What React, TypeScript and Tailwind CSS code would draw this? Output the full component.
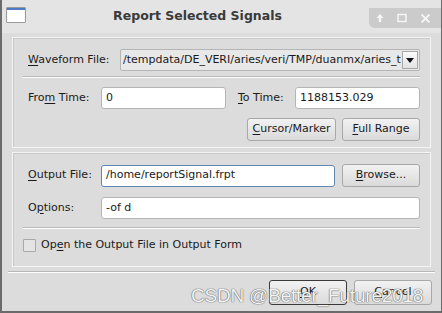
import React from 'react'

const font = { fontFamily: '"DejaVu Sans", Verdana, sans-serif' }

// underline one letter, like a Tk mnemonic
const Mn = ({ text, at }: { text: string; at: number }) => (
  <span>
    {text.slice(0, at)}
    <span className="underline underline-offset-2">{text[at]}</span>
    {text.slice(at + 1)}
  </span>
)

const Field = ({ value, className = '', focus = false }: { value: string; className?: string; focus?: boolean }) => (
  <div
    className={`h-[22px] bg-white rounded-[3px] flex items-center px-[4px] text-[11px] text-[#1a1a1a] whitespace-nowrap overflow-hidden border ${
      focus ? 'border-[#5f87b3]' : 'border-[#b5b5b5]'
    } ${className}`}
  >
    {value}
  </div>
)

const Btn = ({ children, className = '', primary = false }: { children: React.ReactNode; className?: string; primary?: boolean }) => (
  <div
    className={`h-[23px] rounded-[3px] flex items-center justify-center text-[11px] text-[#1a1a1a] bg-gradient-to-b from-[#f2f2f2] to-[#dadada] border ${
      primary ? 'border-[#3a3a3a]' : 'border-[#a8a8a8]'
    } ${className}`}
  >
    {children}
  </div>
)

const Sep = ({ className = '' }: { className?: string }) => (
  <div className={`h-[2px] border-t border-[#b8b8b8] border-b border-b-white ${className}`} />
)

export default function App() {
  return (
    <div style={font} className="relative w-[442px] h-[313px] bg-[#dcdcdc] border-l-2 border-b-2 border-r border-[#6b6b6b] flex flex-col overflow-hidden">
      {/* title bar */}
      <div className="h-[33px] flex items-start relative bg-[#e4e4e4]">
        <div className="ml-[4px] mt-[7px] w-[20px] h-[16px] bg-white border border-[#9a9a9a] rounded-[1px] overflow-hidden">
          <div className="h-[2px] bg-[#4a7bc4]" />
        </div>
        <div className="flex-1 text-center mt-[7px] text-[12.5px] font-bold text-[#3a3a3a]">Report Selected Signals</div>
        <div className="mt-[8px] w-[72px] h-[20px] bg-[#cbcbcb] rounded-bl-[6px] flex items-center justify-around pr-[4px]">
          <svg width="10" height="10" viewBox="0 0 10 10">
            <path d="M5 1 L1.5 5 H3.8 V9 H6.2 V5 H8.5 Z" fill="#f7f7f7" />
          </svg>
          <svg width="10" height="10" viewBox="0 0 10 10">
            <rect x="1" y="1.5" width="8" height="7" fill="none" stroke="#f7f7f7" strokeWidth="1.4" />
          </svg>
          <svg width="11" height="11" viewBox="0 0 10 10">
            <path d="M1.5 1.5 L8.5 8.5 M8.5 1.5 L1.5 8.5" stroke="#f7f7f7" strokeWidth="1.8" />
          </svg>
        </div>
      </div>

      <div className="px-[10px] pt-[4px] flex flex-col gap-[4px]">
        {/* panel 1 */}
        <div className="h-[111px] border border-[#f4f4f4] shadow-[inset_1px_1px_0_#c8c8c8] px-[10px] pt-[11px]">
          <div className="flex items-center h-[22px]">
            <div className="w-[97px] pl-[5px] text-[11px] text-[#1a1a1a]"><Mn text="Waveform File:" at={0} /></div>
            <div className="flex-1 h-[22px] bg-[#e8e8e8] border border-[#b5b5b5] rounded-[2px] flex items-center pl-[2px] text-[11px] text-[#1a1a1a] overflow-hidden whitespace-nowrap">
              <span className="flex-1 overflow-hidden">/tempdata/DE_VERI/aries/veri/TMP/duanmx/aries_t</span>
              <div className="w-[16px] h-[18px] mr-[1px] bg-gradient-to-b from-[#fafafa] to-[#e2e2e2] border border-[#a8a8a8] flex items-center justify-center">
                <svg width="8" height="5" viewBox="0 0 8 5"><path d="M0 0 H8 L4 5 Z" fill="#111" /></svg>
              </div>
            </div>
          </div>
          <Sep className="mt-[5px]" />
          <div className="flex items-center mt-[9px]">
            <div className="w-[78px] pl-[5px] text-[11px] text-[#1a1a1a]"><Mn text="From Time:" at={3} /></div>
            <Field value="0" className="w-[125px]" />
            <div className="w-[69px] pl-[12px] text-[11px] text-[#1a1a1a]"><Mn text="To Time:" at={0} /></div>
            <Field value="1188153.029" className="flex-1" />
          </div>
          <div className="flex justify-end gap-[6px] mt-[9px]">
            <Btn className="w-[89px]"><Mn text="Cursor/Marker" at={0} /></Btn>
            <Btn className="w-[78px]"><Mn text="Full Range" at={0} /></Btn>
          </div>
        </div>

        {/* panel 2 */}
        <div className="h-[115px] border border-[#f4f4f4] shadow-[inset_1px_1px_0_#c8c8c8] px-[10px] pt-[11px]">
          <div className="flex items-center">
            <div className="w-[78px] pl-[5px] text-[11px] text-[#1a1a1a]"><Mn text="Output File:" at={0} /></div>
            <Field value="/home/reportSignal.frpt" focus className="w-[234px]" />
            <Btn className="w-[78px] ml-[7px] h-[22px]"><Mn text="Browse..." at={0} /></Btn>
          </div>
          <div className="flex items-center mt-[10px]">
            <div className="w-[78px] pl-[5px] text-[11px] text-[#1a1a1a]"><Mn text="Options:" at={1} /></div>
            <Field value="-of d" className="flex-1" />
          </div>
          <Sep className="mt-[8px]" />
          <div className="flex items-center mt-[8px] gap-[5px]">
            <div className="w-[13px] h-[13px] bg-[#e4e4e4] border border-[#a8a8a8] rounded-[1px]" />
            <div className="text-[11px] text-[#1a1a1a]"><Mn text="Open the Output File in Output Form" at={2} /></div>
          </div>
        </div>
      </div>

      <Sep className="mx-[6px] mt-[4px]" />
      <div className="flex justify-end gap-[7px] pr-[9px] mt-[7px]">
        <Btn primary className="w-[78px] h-[25px]"><Mn text="OK" at={0} /></Btn>
        <Btn className="w-[78px] h-[25px]"><Mn text="Cancel" at={0} /></Btn>
      </div>

      {/* watermark */}
      <div
        className="absolute left-[189px] top-[284px] text-[19px] leading-[24px] tracking-[-0.2px] text-[#f4f4f4] [text-shadow:0_0_1px_#555,0_0_1px_#555] whitespace-nowrap pointer-events-none"
        style={{ fontFamily: '"Liberation Sans", Arial, sans-serif' }}
      >
        CSDN @Better_Future2018
      </div>
    </div>
  )
}
